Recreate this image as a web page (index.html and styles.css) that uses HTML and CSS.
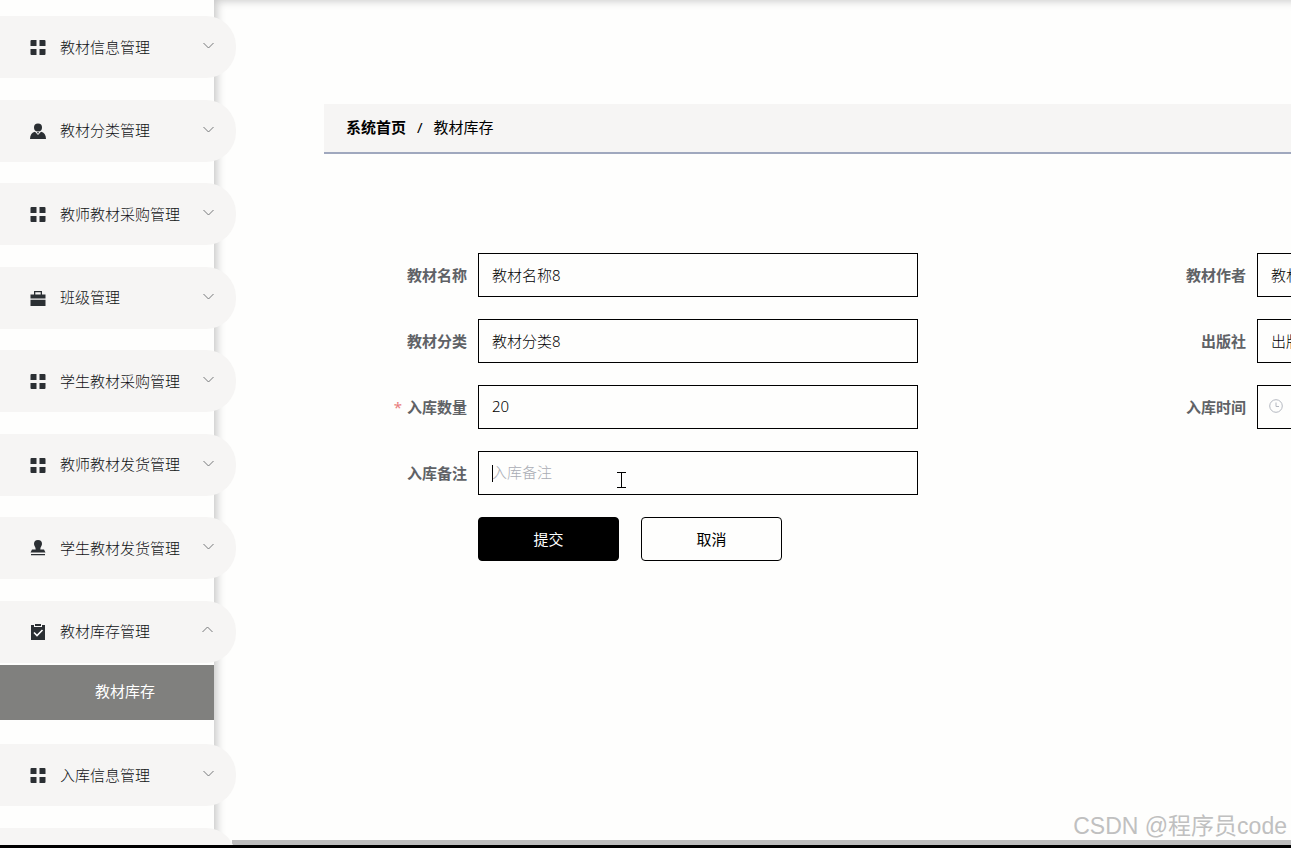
FILE: index.html
```html
<!DOCTYPE html>
<html lang="zh-CN">
<head>
    <meta charset="UTF-8">
    <title>教材库存</title>
    <link rel="stylesheet" href="styles.css">
</head>

<body>

<!-- Shared icons -->
<svg class="sprite" aria-hidden="true">
    <symbol id="icon-grid" viewBox="0 0 16 16">
        <path d="M.5 2a1 1 0 0 1 1-1h5v6h-6zM9.500 1h5a1 1 0 0 1 1 1v5h-6zM.5 10h6v6h-5a1 1 0 0 1-1-1zM9.500 10h6v5a1 1 0 0 1-1 1h-5z"/>
    </symbol>
    <symbol id="icon-user" viewBox="0 0 16 16">
        <circle cx="8" cy="4.500" r="4"/>
        <path d="M0 16c0-4 2-6.500 5-7.200L8 12l3-3.200c3 .7 5 3.200 5 7.200z"/>
        <path d="M7 9h2l-1 2z"/>
    </symbol>
    <symbol id="icon-case" viewBox="0 0 16 16">
        <path d="M4 4.500V1h8v3.500h3.500v4H.5v-4zm1.300 0h5.400V2.200H5.300zM.5 9.700h15V16H.5z"/>
    </symbol>
    <symbol id="icon-stamp" viewBox="0 0 16 16">
        <path d="M8 0a4 4 0 0 1 4 4c0 2-1.700 3-1.700 5.500H14l1.500 3H.5l1.500-3h3.700C5.700 7 4 6 4 4a4 4 0 0 1 4-4zM1 14h14v1.300H1z"/>
    </symbol>
    <symbol id="icon-check" viewBox="0 0 16 16">
        <path d="M1 1h3v2h8V1h3v15H1zM5 0h6v2H5z"/>
        <path d="M4 8.500l3 3 5.500-5.500" fill="none" stroke="#fff" stroke-width="1.600"/>
    </symbol>
    <symbol id="icon-arrow" viewBox="0 0 12 12">
        <path d="M1.500 4L6.500 9l5-5" fill="none" stroke="currentColor"/>
    </symbol>
</svg>

<div class="page">
    <aside class="sidebar">
        <ul class="menu">
            <li><button class="menu-item" type="button"><svg class="icon"><use href="#icon-grid"/></svg><span>教材信息管理</span><svg class="arrow"><use href="#icon-arrow"/></svg></button></li>
            <li><button class="menu-item" type="button"><svg class="icon"><use href="#icon-user"/></svg><span>教材分类管理</span><svg class="arrow"><use href="#icon-arrow"/></svg></button></li>
            <li><button class="menu-item" type="button"><svg class="icon"><use href="#icon-grid"/></svg><span>教师教材采购管理</span><svg class="arrow"><use href="#icon-arrow"/></svg></button></li>
            <li><button class="menu-item" type="button"><svg class="icon"><use href="#icon-case"/></svg><span>班级管理</span><svg class="arrow"><use href="#icon-arrow"/></svg></button></li>
            <li><button class="menu-item" type="button"><svg class="icon"><use href="#icon-grid"/></svg><span>学生教材采购管理</span><svg class="arrow"><use href="#icon-arrow"/></svg></button></li>
            <li><button class="menu-item" type="button"><svg class="icon"><use href="#icon-grid"/></svg><span>教师教材发货管理</span><svg class="arrow"><use href="#icon-arrow"/></svg></button></li>
            <li><button class="menu-item" type="button"><svg class="icon"><use href="#icon-stamp"/></svg><span>学生教材发货管理</span><svg class="arrow"><use href="#icon-arrow"/></svg></button></li>
            <li class="open">
                <button class="menu-item" type="button"><svg class="icon"><use href="#icon-check"/></svg><span>教材库存管理</span><svg class="arrow"><use href="#icon-arrow"/></svg></button>
                <a class="submenu-item" href="#">教材库存</a>
            </li>
            <li><button class="menu-item" type="button"><svg class="icon"><use href="#icon-grid"/></svg><span>入库信息管理</span><svg class="arrow"><use href="#icon-arrow"/></svg></button></li>
            <li class="cut"><button class="menu-item" type="button" aria-label="更多"></button></li>
        </ul>
    </aside>

    <main class="content">
        <nav class="breadcrumb">
            <a href="#">系统首页</a>
            <span>/</span>
            <span>教材库存</span>
        </nav>

        <form class="form">
            <div class="field">
                <label for="name">教材名称</label>
                <input type="text" id="name" value="教材名称8">
            </div>
            <div class="field">
                <label for="author">教材作者</label>
                <input type="text" id="author" value="教材作者8">
            </div>
            <div class="field">
                <label for="type">教材分类</label>
                <input type="text" id="type" value="教材分类8">
            </div>
            <div class="field">
                <label for="press">出版社</label>
                <input type="text" id="press" value="出版社8">
            </div>
            <div class="field required">
                <label for="count">入库数量</label>
                <input type="text" id="count" value="20">
            </div>
            <div class="field">
                <label for="time">入库时间</label>
                <div class="control">
                    <input class="with-icon" type="text" id="time">
                    <svg class="clock" viewBox="0 0 14 14"><circle cx="7" cy="7" r="6.300"/><path d="M7 3.500V7.500H10"/></svg>
                </div>
            </div>
            <div class="field">
                <label for="remark">入库备注</label>
                <div class="control">
                    <input type="text" id="remark" placeholder="入库备注">
                    <span class="caret"></span>
                    <svg class="pointer" viewBox="0 0 9 16"><path d="M0 .5h9M0 15.500h9M4.500 0v16"/></svg>
                </div>
            </div>
            <div class="actions">
                <button class="btn btn-primary" type="submit">提交</button>
                <button class="btn" type="button">取消</button>
            </div>
        </form>
    </main>
</div>

<div class="scrollbar"></div>
<div class="watermark">CSDN @程序员code</div>

</body>
</html>
```
FILE: styles.css
```css
* {
    box-sizing: border-box;
}

body {
    margin: 0;
    height: 100vh;
    display: flex;
    flex-direction: column;
    overflow: hidden;
    position: relative;
    background: #fefefd;
    border-bottom: 3px solid #000;
    font-family: "Noto Sans", "Noto Sans CJK SC", sans-serif;
    font-size: 15px;
    color: #000;
}

input, button {
    font-family: inherit;
    font-size: inherit;
}

.sprite {
    position: absolute;
    width: 0;
    height: 0;
}

.page {
    flex: 1;
    min-height: 0;
    display: flex;
    overflow: hidden;
}

/* Sidebar */
.sidebar {
    flex: 0 0 214px;
    position: relative;
    z-index: 2;
}

.menu {
    height: 100%;
    margin: 0;
    padding: 16px 0 0;
    list-style: none;
    display: flex;
    flex-direction: column;
    justify-content: space-between;
}

.menu-item {
    width: calc(100% + 22px);
    height: 62px;
    padding: 0 22px 0 30px;
    display: flex;
    align-items: center;
    border: 0;
    border-radius: 0 30px 30px 0;
    background: #f6f5f4;
    color: #101214;
    font-weight: 300;
    cursor: pointer;
}

.menu-item span {
    padding-bottom: 2px;
}

.icon {
    width: 16px;
    height: 16px;
    margin-right: 14px;
    fill: #2b2f33;
}

.arrow {
    width: 12px;
    height: 12px;
    margin: 0 0 4px auto;
    color: #77797b;
}

.open {
    padding-bottom: 3px;
}

.open .arrow {
    transform: rotate(180deg);
}

.submenu-item {
    display: block;
    height: 55px;
    margin-top: 2px;
    padding-left: 95px;
    line-height: 53px;
    background: #80807e;
    color: #fff;
    text-decoration: none;
}

.cut {
    height: 17px;
}

/* Content */
.content {
    flex: 1;
    min-width: 0;
    padding: 104px 0 0 110px;
    overflow: hidden;
    box-shadow: inset 6px 4px 8px -3px #c8c8c8;
}

.breadcrumb {
    height: 50px;
    padding: 0 22px 3px;
    display: flex;
    align-items: center;
    gap: 11px;
    background: #f6f5f4;
    border-bottom: 2px solid #a0a8be;
}

.breadcrumb a {
    color: #000;
    font-weight: bold;
    text-decoration: none;
}

.form {
    margin-top: 99px;
    display: grid;
    grid-template-columns: repeat(2, 779px);
    row-gap: 22px;
}

.field {
    display: flex;
    align-items: center;
}

.field label {
    width: 154px;
    padding: 0 11px 2px 0;
    text-align: right;
    color: #606266;
    font-weight: bold;
}

.required label::before {
    content: "*";
    margin-right: 5px;
    color: #e87c7c;
    font-weight: normal;
}

.control {
    position: relative;
}

.field input {
    width: 440px;
    height: 44px;
    padding: 0 13px 2px;
    border: 1px solid #000;
    background: #fefefd;
    color: #000;
    font-weight: 300;
    outline: none;
}

.field .with-icon {
    padding-left: 33px;
}

.field input::placeholder {
    color: #a9acb4;
}

.clock {
    position: absolute;
    left: 12px;
    top: 14px;
    width: 14px;
    height: 14px;
    fill: none;
    stroke: #b4b8c0;
}

.caret {
    position: absolute;
    left: 14px;
    top: 14px;
    width: 1px;
    height: 17px;
    background: #000;
}

.pointer {
    position: absolute;
    left: 139px;
    top: 21px;
    width: 9px;
    height: 16px;
    stroke: #000;
}

.actions {
    grid-column: 1;
    padding-left: 154px;
    display: flex;
    gap: 22px;
}

.btn {
    width: 141px;
    height: 44px;
    padding: 0 0 2px;
    border: 1px solid #000;
    border-radius: 4px;
    background: #fefefd;
    color: #000;
    cursor: pointer;
}

.btn-primary {
    background: #000;
    color: #fff;
}

/* Bottom of the window */
.scrollbar {
    position: absolute;
    left: 232px;
    right: 0;
    bottom: 0;
    height: 5px;
    background: #bdbdbd;
}

.watermark {
    position: absolute;
    right: 4px;
    bottom: 4px;
    z-index: 3;
    font-family: "Liberation Sans", "Noto Sans CJK SC", sans-serif;
    font-size: 23px;
    color: #c0c0c0;
}
```
